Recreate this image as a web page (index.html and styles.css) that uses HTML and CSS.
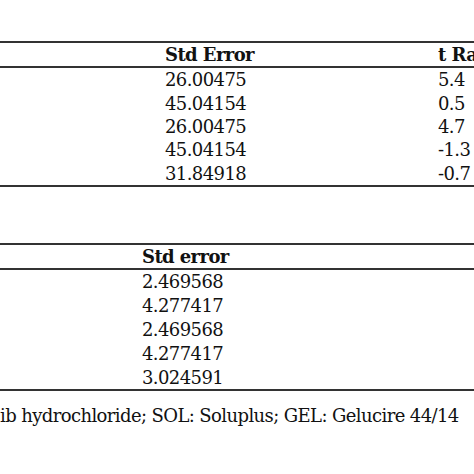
FILE: index.html
```html
<!DOCTYPE html>
<html>
<head>
<meta charset="utf-8">
<link rel="stylesheet" href="styles.css">
</head>
<body>
<div class="page">
  <div class="table t1">
    <div class="row head">
      <div class="c1"></div>
      <div class="c2">Std Error</div>
      <div class="c3">t Ratio</div>
    </div>
    <div class="body">
      <div class="row"><div class="c1"></div><div class="c2">26.00475</div><div class="c3">5.4</div></div>
      <div class="row"><div class="c1"></div><div class="c2">45.04154</div><div class="c3">0.5</div></div>
      <div class="row"><div class="c1"></div><div class="c2">26.00475</div><div class="c3">4.7</div></div>
      <div class="row"><div class="c1"></div><div class="c2">45.04154</div><div class="c3">-1.3</div></div>
      <div class="row"><div class="c1"></div><div class="c2">31.84918</div><div class="c3">-0.7</div></div>
    </div>
  </div>
  <div class="table t2">
    <div class="row head">
      <div class="c1"></div>
      <div class="c2">Std error</div>
    </div>
    <div class="body">
      <div class="row"><div class="c1"></div><div class="c2">2.469568</div></div>
      <div class="row"><div class="c1"></div><div class="c2">4.277417</div></div>
      <div class="row"><div class="c1"></div><div class="c2">2.469568</div></div>
      <div class="row"><div class="c1"></div><div class="c2">4.277417</div></div>
      <div class="row"><div class="c1"></div><div class="c2">3.024591</div></div>
    </div>
  </div>
  <p class="note">ib hydrochloride; SOL: Soluplus; GEL: Gelucire 44/14</p>
</div>
</body>
</html>
```
FILE: styles.css
```css
html, body {
  margin: 0;
  padding: 0;
  background: #ffffff;
}
.page {
  width: 474px;
  height: 474px;
  overflow: hidden;
  font-family: "DejaVu Serif", "Liberation Serif", serif;
  font-size: 18px;
  letter-spacing: -0.6px;
  color: #111111;
  padding-top: 41px;
  box-sizing: border-box;
}
.table {
  width: 474px;
  border-top: 2px solid #333333;
  border-bottom: 2px solid #333333;
}
.row {
  display: flex;
  height: 23.4px;
  align-items: center;
  white-space: nowrap;
}
.head {
  height: 23px;
  font-weight: bold;
  border-bottom: 2px solid #333333;
}
.t1 .c1 { width: 165px; flex: none; }
.t1 .c2 { width: 273px; flex: none; }
.t1 .c3 { flex: 1; overflow: hidden; }
.t2 { margin-top: 56px; }
.t2 .c1 { width: 142px; flex: none; }
.t2 .body .row { height: 23.8px; }
.note {
  margin: 13px 0 0 0;
  white-space: nowrap;
  line-height: 24px;
}
```
